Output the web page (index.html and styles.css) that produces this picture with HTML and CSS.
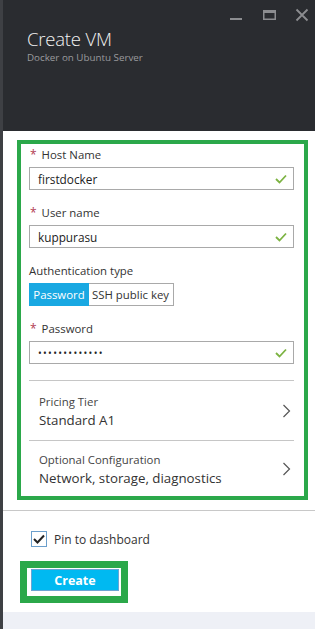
FILE: index.html
```html
<!DOCTYPE html>
<html>
<head>
<meta charset="utf-8">
<link rel="stylesheet" href="styles.css">
</head>
<body>
<div class="page">
  <div class="edge"></div>
  <div class="blade">
    <header class="head">
      <div class="controls">
        <svg class="ctl" width="14" height="14" viewBox="0 0 14 14"><rect x="1" y="10" width="12" height="2" fill="#8c8d90"/></svg>
        <svg class="ctl" width="14" height="14" viewBox="0 0 14 14"><rect x="1.75" y="2.75" width="11.5" height="8.5" fill="none" stroke="#8c8d90" stroke-width="1.5"/><rect x="1" y="2" width="13" height="3" fill="#8c8d90"/></svg>
        <svg class="ctl" width="14" height="14" viewBox="0 0 14 14"><path d="M1.5 1.5 L12.5 12.5 M12.5 1.5 L1.5 12.5" stroke="#8c8d90" stroke-width="1.8" fill="none"/></svg>
      </div>
      <h1 class="title">Create VM</h1>
      <div class="subtitle">Docker on Ubuntu Server</div>
    </header>
    <main class="content">
      <div class="highlight">
        <div class="field">
          <label class="label"><span class="req">*</span>Host Name</label>
          <div class="input"><span>firstdocker</span><svg class="ok" width="12" height="10" viewBox="0 0 12 10"><path d="M1 5 L4.5 8.5 L11 1.5" stroke="#7cb342" stroke-width="1.8" fill="none"/></svg></div>
        </div>
        <div class="field">
          <label class="label"><span class="req">*</span>User name</label>
          <div class="input"><span>kuppurasu</span><svg class="ok" width="12" height="10" viewBox="0 0 12 10"><path d="M1 5 L4.5 8.5 L11 1.5" stroke="#7cb342" stroke-width="1.8" fill="none"/></svg></div>
        </div>
        <div class="field">
          <label class="label plain">Authentication type</label>
          <div class="toggle"><span class="opt on">Password</span><span class="opt">SSH public key</span></div>
        </div>
        <div class="field last">
          <label class="label"><span class="req">*</span>Password</label>
          <div class="input"><span class="dots">•••••••••••••</span><svg class="ok" width="12" height="10" viewBox="0 0 12 10"><path d="M1 5 L4.5 8.5 L11 1.5" stroke="#7cb342" stroke-width="1.8" fill="none"/></svg></div>
        </div>
        <div class="nav">
          <div class="navtext"><div class="navlabel">Pricing Tier</div><div class="navvalue">Standard A1</div></div>
          <svg class="chev" width="9" height="14" viewBox="0 0 9 14"><path d="M1.5 1 L7.5 7 L1.5 13" stroke="#555" stroke-width="1.2" fill="none"/></svg>
        </div>
        <div class="nav short">
          <div class="navtext"><div class="navlabel">Optional Configuration</div><div class="navvalue">Network, storage, diagnostics</div></div>
          <svg class="chev" width="9" height="14" viewBox="0 0 9 14"><path d="M1.5 1 L7.5 7 L1.5 13" stroke="#555" stroke-width="1.2" fill="none"/></svg>
        </div>
      </div>
    </main>
    <footer class="foot">
      <label class="pin"><span class="box"><svg width="12" height="10" viewBox="0 0 12 10"><path d="M1 5 L4.5 8.5 L11 1.5" stroke="#222" stroke-width="2" fill="none"/></svg></span>Pin to dashboard</label>
      <div class="btnwrap"><button class="create">Create</button></div>
    </footer>
    <div class="tray"></div>
  </div>
  <div class="redge"></div>
</div>
</body>
</html>
```
FILE: styles.css
```css
* { box-sizing: border-box; margin: 0; padding: 0; }
html, body { width: 318px; height: 629px; overflow: hidden; background: #fff; }
body { font-family: "Open Sans", "Noto Sans", sans-serif; color: #333; }

.page { display: flex; height: 629px; }
.edge { width: 3px; background: #3e4044; }
.redge { width: 3px; background: #fff; }
.blade { width: 312px; display: flex; flex-direction: column; }

.head { height: 131px; flex: none; background: #2a2c30; position: relative; padding: 28px 0 0 24px; }
.controls { position: absolute; top: 8px; right: 6px; display: flex; gap: 19px; }
.ctl { display: block; }
.title { font-weight: 300; font-size: 18.5px; line-height: 22px; color: #f2f2f2; letter-spacing: -0.2px; }
.subtitle { font-size: 9.8px; line-height: 12px; color: #9a9b9e; margin-top: 2px; }

.content { padding: 9px 0 0 14px; flex: none; }
.highlight { width: 291px; border: 4px solid #2ba84a; padding: 3px 10px 0 8px; }

.field { margin-bottom: 15px; }
.field.last { margin-bottom: 16px; }
.label { display: block; font-size: 11.4px; line-height: 16px; color: #333; margin-bottom: 4px; }
.req { color: #b23a52; margin: 0 5px 0 1px; font-size: 12px; }
.input { height: 23px; border: 1px solid #a9a9a9; display: flex; align-items: center; justify-content: space-between; padding: 0 6px 0 8px; font-size: 11.8px; color: #222; }
.dots { font-size: 10px; letter-spacing: 1.3px; color: #222; }
.ok { display: block; }

.toggle { display: flex; width: fit-content; height: 23px; border: 1px solid #a9a9a9; }
.opt { display: flex; align-items: center; padding: 0 4px 0 3px; font-size: 11.4px; color: #333; }
.opt.on { background: #19a8e2; color: #fff; width: 60px; justify-content: center; margin: -1px 0 -1px -1px; padding: 0; }

.nav { border-top: 1px solid #c6c6c6; height: 60px; display: flex; align-items: center; justify-content: space-between; padding: 0 3px 0 10px; }
.nav.short { height: 56px; }
.navtext { padding-top: 1px; }
.navlabel { font-size: 11.4px; line-height: 17px; color: #444; }
.navvalue { font-size: 13.3px; line-height: 20px; color: #333; }
.chev { display: block; }

.foot { margin-top: 10px; border-top: 1px solid #c8c8c8; padding: 20px 0 0 17px; height: 102px; flex: none; }
.pin { display: flex; align-items: center; font-size: 12px; color: #333; height: 16px; margin-left: 11px; }
.box { width: 16px; height: 16px; border: 1px solid #6b9fcc; display: flex; align-items: center; justify-content: center; margin-right: 7px; }
.btnwrap { margin-top: 14px; width: 108px; height: 42px; border: 7px solid #2ba84a; padding: 1px 2px; display: flex; }
.create { width: 90px; height: 22px; margin: 0 0 0 2px; background: #00b9f1; border: 1px solid #6aa4d4; color: #fff; font-family: inherit; font-weight: 700; font-size: 12.5px; }

.tray { flex: 1; background: #eef0f6; }
```
